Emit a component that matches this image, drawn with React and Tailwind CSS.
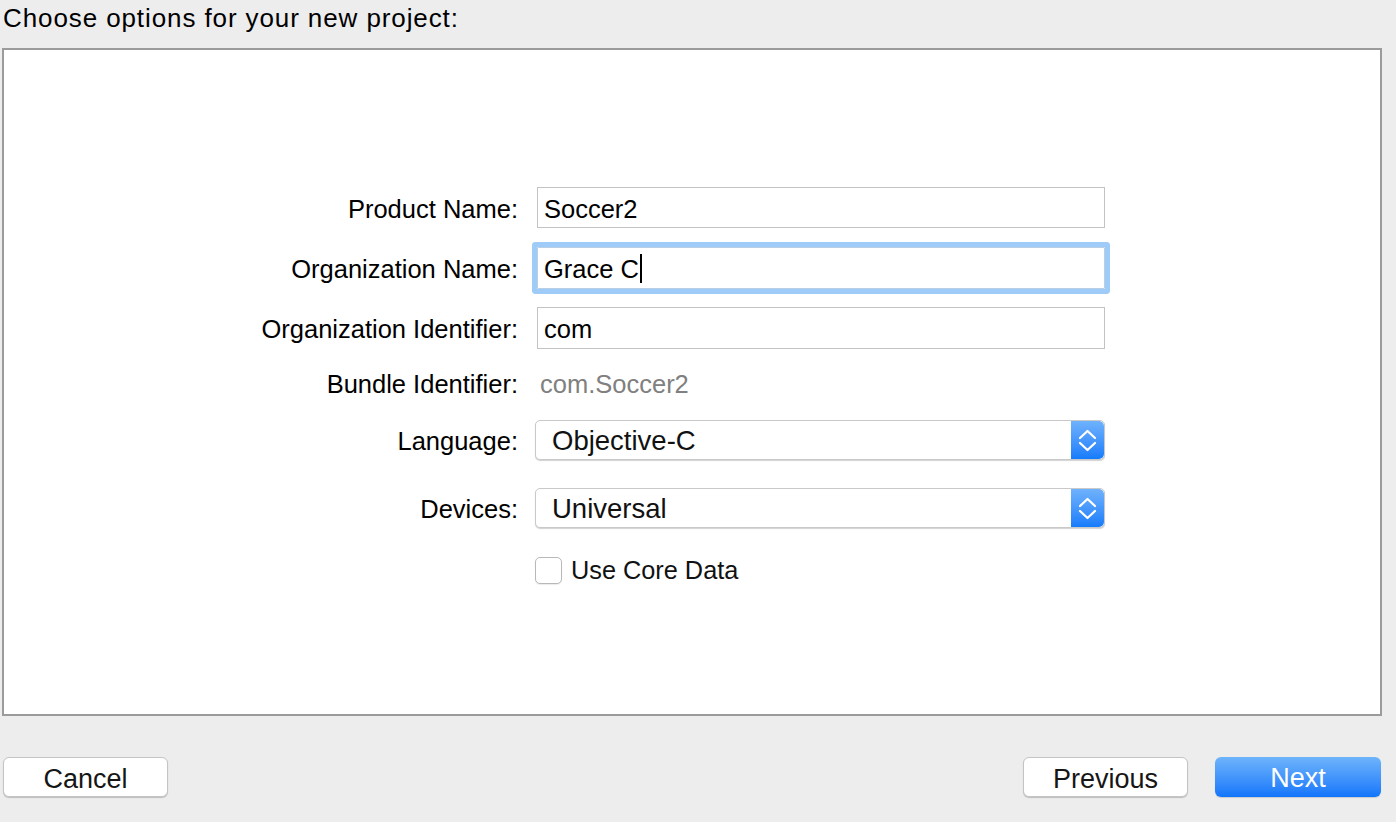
import { useState } from 'react'

function Stepper() {
  return (
    <div className="w-[33px] h-full rounded-r-[5px] bg-gradient-to-b from-[#6fb2fd] to-[#137cfb] flex items-center justify-center">
      <svg width="33" height="40" viewBox="0 0 33 40" fill="none" stroke="white" strokeWidth="2.3" strokeLinecap="round" strokeLinejoin="round">
        <path d="M9 18 L16.5 11 L24 18" />
        <path d="M9 23 L16.5 30 L24 23" />
      </svg>
    </div>
  )
}

function Popup({ value }) {
  return (
    <div className="-ml-[2px] w-[570px] h-[40px] flex bg-white border border-[#c9c9c9] rounded-[5px] shadow-[0_1px_1px_rgba(0,0,0,0.18)] overflow-hidden">
      <div className="flex-1 flex items-center pl-[16px] pt-[2px] text-[27.5px] text-[#111]">{value}</div>
      <Stepper />
    </div>
  )
}

function Row({ label, className, children }) {
  return (
    <div className={`flex items-center ${className}`}>
      <div className="w-[514px] text-right text-[25.5px] text-black pt-[3px]">{label}</div>
      <div className="ml-[19px] flex items-center">{children}</div>
    </div>
  )
}

export default function App() {
  const [useCoreData, setUseCoreData] = useState(false)

  return (
    <div className="h-[822px] w-full bg-[#ededed] font-['Liberation_Sans',Arial,sans-serif] text-black overflow-hidden">
      <div className="h-[48px] pl-[3px] pt-[3px]">
        <h1 className="text-[26px] leading-[30px] tracking-[0.9px]">Choose options for your new project:</h1>
      </div>

      <div className="mx-[2px] w-[1380px] h-[668px] border-2 border-[#9b9b9b] bg-white pt-[137px]">
        <Row label="Product Name:" className="h-[41px]">
          <div className="w-[568px] h-[41px] border border-[#c3c3c3] flex items-center pl-[6px] pt-[3px] text-[25.5px]">Soccer2</div>
        </Row>

        <Row label="Organization Name:" className="mt-[19px] h-[42px]">
          <div className="w-[568px] h-[42px] border border-[#b9cfe6] rounded-[1px] shadow-[0_0_0_5px_#9ecbf7] flex items-center pl-[6px] pt-[3px] text-[25.5px]">
            Grace C<span className="inline-block w-[2px] h-[29px] bg-black ml-[1px] -mt-[2px]" />
          </div>
        </Row>

        <Row label="Organization Identifier:" className="mt-[18px] h-[42px]">
          <div className="w-[568px] h-[42px] border border-[#c3c3c3] flex items-center pl-[6px] pt-[3px] text-[25.5px]">com</div>
        </Row>

        <Row label="Bundle Identifier:" className="mt-[19px] h-[30px]">
          <div className="pl-[3px] pt-[3px] text-[25.5px] text-[#808080]">com.Soccer2</div>
        </Row>

        <Row label="Language:" className="mt-[22px] h-[40px]">
          <Popup value="Objective-C" />
        </Row>

        <Row label="Devices:" className="mt-[28px] h-[40px]">
          <Popup value="Universal" />
        </Row>

        <div className="mt-[28px] h-[28px] flex items-center pl-[531px]">
          <button
            onClick={() => setUseCoreData(!useCoreData)}
            className="w-[27px] h-[27px] rounded-[5px] border border-[#b8b8b8] bg-white shadow-[0_1px_1px_rgba(0,0,0,0.08)]"
          />
          <span className="ml-[9px] pt-[2px] text-[25.3px] text-[#111]">Use Core Data</span>
        </div>
      </div>

      <div className="mt-[41px] flex items-center pl-[3px] pr-[15px]">
        <button className="w-[165px] h-[40px] pt-[1px] bg-white border border-[#c4c4c4] rounded-[6px] shadow-[0_1px_1px_rgba(0,0,0,0.2)] text-[27px] text-[#161616]">Cancel</button>
        <div className="flex-1" />
        <button className="w-[165px] h-[40px] pt-[1px] bg-white border border-[#c4c4c4] rounded-[6px] shadow-[0_1px_1px_rgba(0,0,0,0.2)] text-[27px] text-[#161616]">Previous</button>
        <button className="ml-[27px] w-[166px] h-[40px] pt-[1px] rounded-[6px] bg-gradient-to-b from-[#6eb4fb] to-[#0f75fb] shadow-[0_1px_1px_rgba(0,0,0,0.15)] text-[27px] text-white">Next</button>
      </div>
    </div>
  )
}
